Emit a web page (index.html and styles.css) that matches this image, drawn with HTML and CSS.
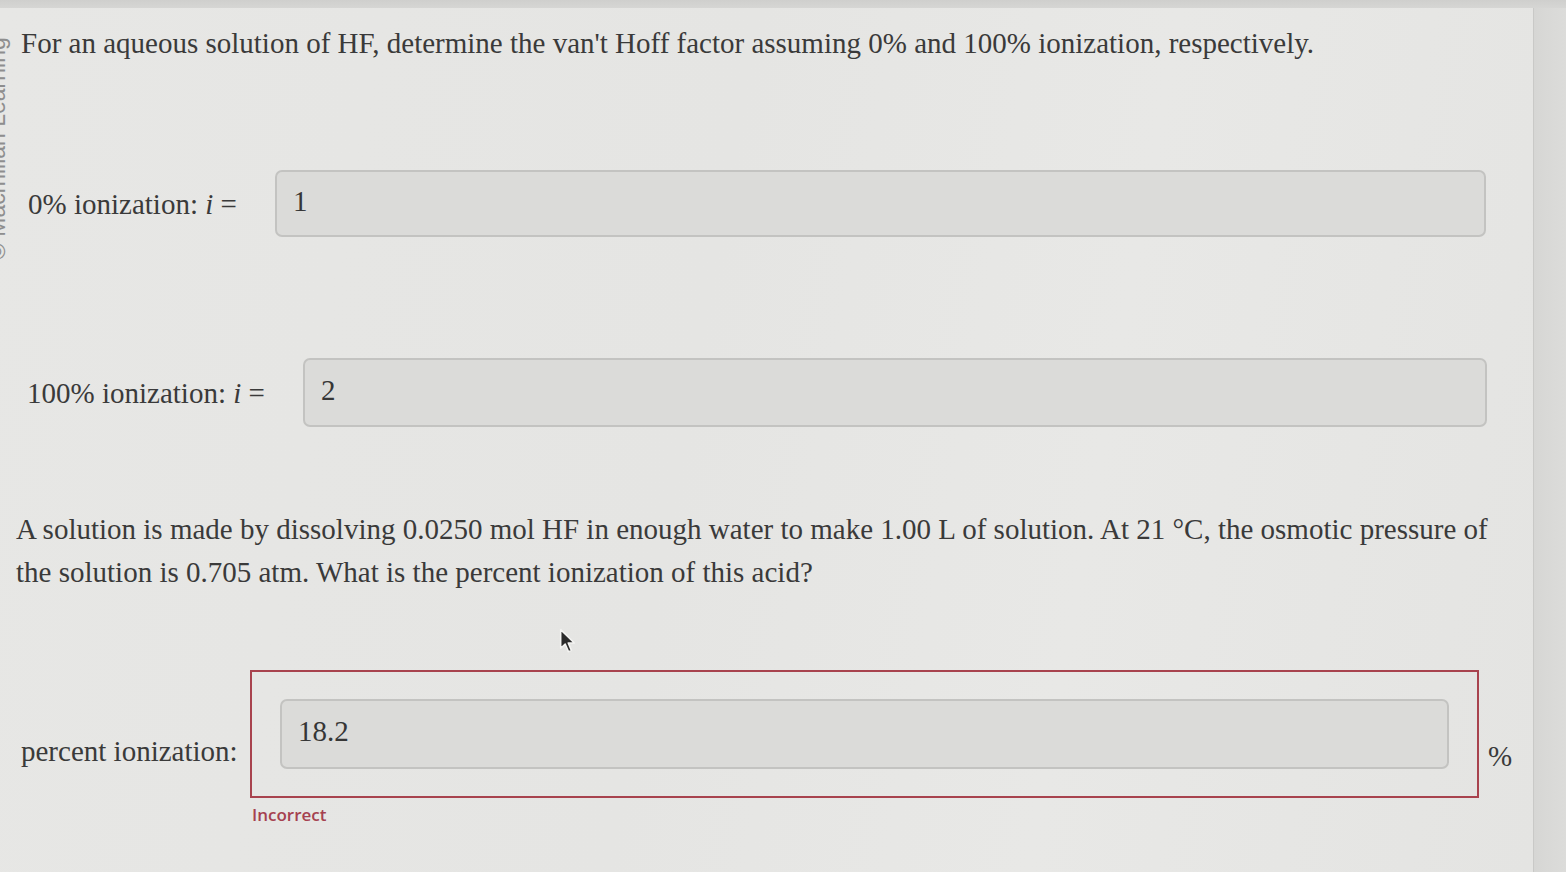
FILE: index.html
```html
<!DOCTYPE html>
<html lang="en">
<head>
<meta charset="utf-8">
<title>van't Hoff factor</title>
<link rel="stylesheet" href="styles.css">
</head>
<body>
<div class="screen">
  <div class="panel">
    <span class="watermark">© Macmillan Learning</span>
    <p class="title">For an aqueous solution of HF, determine the van't Hoff factor assuming 0% and 100% ionization, respectively.</p>

    <div class="row row-one">
      <span class="label label-one">0% ionization: <i>i</i> =</span>
      <div class="field field-one"><span class="value">1</span></div>
    </div>

    <div class="row row-two">
      <span class="label label-two">100% ionization: <i>i</i> =</span>
      <div class="field field-two"><span class="value">2</span></div>
    </div>

    <p class="para">A solution is made by dissolving 0.0250 mol HF in enough water to make 1.00 L of solution. At 21 °C, the osmotic pressure of<br>the solution is 0.705 atm. What is the percent ionization of this acid?</p>

    <div class="row row-three">
      <span class="label label-three">percent ionization:</span>
      <div class="wrong-box">
        <div class="field field-three"><span class="value">18.2</span></div>
      </div>
      <span class="unit">%</span>
    </div>
    <div class="feedback">Incorrect</div>

    <svg class="cursor" width="18" height="27" viewBox="0 0 16 24" aria-hidden="true">
      <path d="M1.5 1.5 L1.5 18 L5.5 14.2 L8.4 21 L11 19.9 L8.2 13.3 L13.6 13.3 Z" fill="#2b2b2b" stroke="#f4f4f2" stroke-width="1.4" stroke-linejoin="round"/>
    </svg>
  </div>
  <div class="side"></div>
</div>
</body>
</html>
```

FILE: styles.css
```css
html, body {
  margin: 0;
  padding: 0;
}

body {
  width: 1566px;
  height: 872px;
  overflow: hidden;
  background: #d3d3d1;
  font-family: "Liberation Serif", "Times New Roman", serif;
  color: #3a3a3a;
}

.screen {
  display: flex;
  height: 872px;
  padding-top: 8px;
  box-sizing: border-box;
  background: linear-gradient(#cfcfcd, #d6d6d4 8px);
}

.panel {
  position: relative;
  width: 1533px;
  flex: none;
  box-sizing: border-box;
  padding-top: 18px;
  overflow: hidden;
  background: linear-gradient(100deg, #e7e7e5 0%, #e5e5e3 45%, #e8e8e6 70%, #e4e4e2 100%);
  box-shadow: 1px 0 0 #c9c9c7;
}

.side {
  flex: 1;
  background: linear-gradient(90deg, #d6d6d4, #dcdcda);
}

.watermark {
  position: absolute;
  left: -14px;
  top: 252px;
  transform-origin: 0 0;
  transform: rotate(-90deg);
  white-space: nowrap;
  font-family: "Liberation Sans", Arial, sans-serif;
  font-size: 23px;
  line-height: 23px;
  color: #8e8e8e;
}

.title {
  margin: 0 0 0 21px;
  font-size: 29px;
  line-height: 34px;
  white-space: nowrap;
}

.row {
  display: flex;
  align-items: center;
}

.label {
  flex: none;
  font-size: 29px;
  line-height: 34px;
  white-space: nowrap;
}

.label i {
  font-style: italic;
}

.field {
  flex: 1;
  display: flex;
  align-items: center;
  box-sizing: border-box;
  padding: 0 0 6px 16px;
  background: #dbdbd9;
  border: 2px solid #c3c3c1;
  border-radius: 7px;
}

.value {
  font-size: 29px;
  line-height: 34px;
  color: #363636;
}

.row-one {
  margin: 110px 47px 0 28px;
}

.label-one {
  width: 247px;
}

.field-one {
  height: 67px;
}

.row-two {
  margin: 121px 46px 0 27px;
}

.label-two {
  width: 276px;
}

.field-two {
  height: 69px;
}

.para {
  margin: 81px 0 0 16px;
  font-size: 29px;
  line-height: 43px;
  white-space: nowrap;
}

.row-three {
  margin: 76px 0 0 21px;
  align-items: flex-end;
}

.label-three {
  width: 229px;
  margin-bottom: 30px;
}

.wrong-box {
  display: flex;
  width: 1229px;
  height: 128px;
  flex: none;
  box-sizing: border-box;
  padding: 27px 28px 27px 28px;
  border: 2px solid #a8434e;
}

.field-three {
  height: 70px;
}

.unit {
  margin: 0 0 25px 9px;
  font-size: 29px;
  line-height: 34px;
}

.feedback {
  margin: 6px 0 0 252px;
  font-family: "Open Sans", "Liberation Sans", sans-serif;
  font-size: 17px;
  font-weight: 600;
  line-height: 22px;
  color: #a5414f;
}

.cursor {
  position: absolute;
  left: 559px;
  top: 620px;
}
```
